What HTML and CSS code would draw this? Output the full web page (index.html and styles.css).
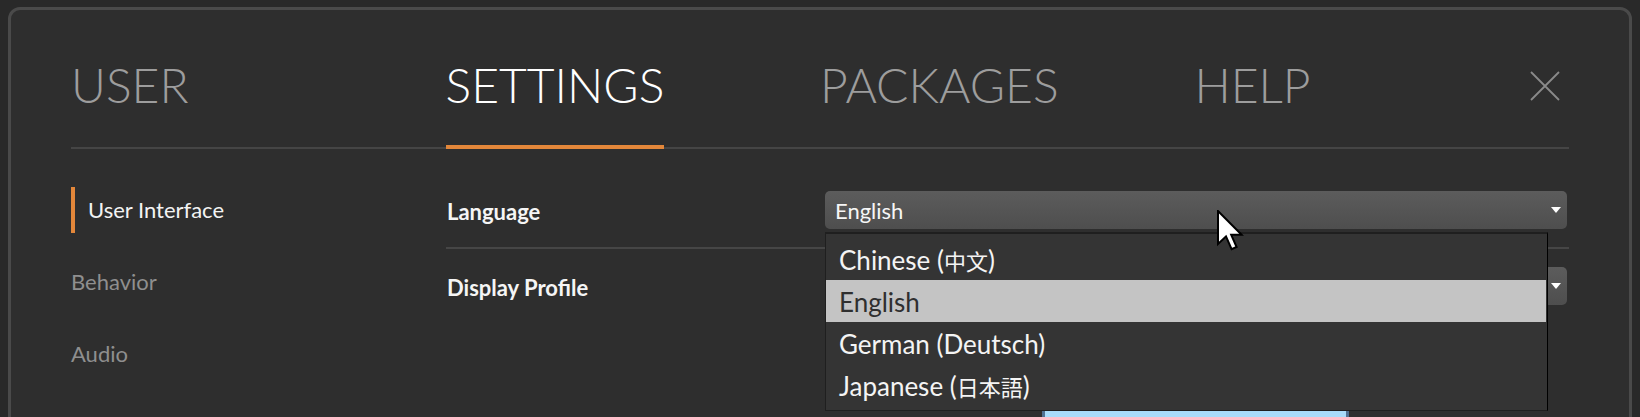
FILE: index.html
```html
<!DOCTYPE html>
<html lang="en">
<head>
<meta charset="utf-8">
<title>Settings</title>
<link rel="stylesheet" href="styles.css">
</head>
<body>
<div class="dialog">
  <header class="tabs">
    <div class="tab"><span class="tab-label">USER</span></div>
    <div class="tab active"><span class="tab-label">SETTINGS</span></div>
    <div class="tab"><span class="tab-label">PACKAGES</span></div>
    <div class="tab tab-last">
      <span class="tab-label">HELP</span>
      <button class="close" aria-label="Close">
        <svg width="30" height="30" viewBox="0 0 30 30"><path d="M1 1 L29 29 M29 1 L1 29" stroke="#8a8a8a" stroke-width="1.8" fill="none"/></svg>
      </button>
    </div>
  </header>
  <div class="content">
    <nav class="sidebar">
      <a class="side-item active">User Interface</a>
      <a class="side-item">Behavior</a>
      <a class="side-item">Audio</a>
    </nav>
    <section class="settings">
      <div class="row divided">
        <div class="label">Language</div>
        <div class="select">
          <span class="value">English</span><span class="arrow"></span>
          <ul class="menu">
            <li>Chinese (<span class="zh" lang="zh">中文</span>)</li>
            <li class="hl">English</li>
            <li>German (Deutsch)</li>
            <li>Japanese (<span class="ja" lang="ja">日本語</span>)</li>
          </ul>
        </div>
      </div>
      <div class="row">
        <div class="label">Display Profile</div>
        <div class="select"><span class="value"></span><span class="arrow"></span></div>
      </div>
      <div class="preview"></div>
    </section>
  </div>
</div>
<svg class="cursor" width="28" height="44" viewBox="0 0 14 22">
  <path d="M0.5 0.5 L0.5 17 L4.5 13.2 L7.3 19.6 L9.8 18.5 L7.1 12.4 L12.3 12.4 Z" fill="#ffffff" stroke="#000000" stroke-width="1" stroke-linejoin="miter"/>
</svg>
</body>
</html>
```

FILE: styles.css
```css
* { box-sizing: border-box; }
html, body { margin: 0; padding: 0; }
body {
  width: 1640px;
  height: 417px;
  overflow: hidden;
  background: #292929;
  font-family: Lato, "Noto Sans", sans-serif;
  position: relative;
}
.dialog {
  margin: 7px 0 0 8px;
  width: 1624px;
  height: 520px;
  background: #2e2e2e;
  border: 3px solid #4a4a4a;
  border-radius: 12px;
  padding: 0 60px;
}
.tabs {
  display: grid;
  grid-template-columns: repeat(4, 1fr);
  padding-top: 51px;
  border-bottom: 2px solid #454545;
}
.tab {
  display: flex;
  align-items: flex-end;
}
.tab-last { justify-content: space-between; align-items: flex-start; }
.tab-label {
  display: block;
  font-size: 48px;
  font-weight: 300;
  line-height: 48px;
  color: #9d9d9d;
  padding-bottom: 36px;
  border-bottom: 4px solid transparent;
  margin-bottom: -2px;
}
.tab.active .tab-label {
  color: #ffffff;
  border-bottom-color: #e3873a;
}
.close {
  margin: 10px 9px 0 0;
  width: 30px;
  height: 30px;
  padding: 0;
  border: 0;
  background: none;
  display: block;
}
.close svg { display: block; }
.content {
  display: grid;
  grid-template-columns: 375px 1fr;
  padding-top: 24px;
}
.sidebar {
  display: flex;
  flex-direction: column;
  align-items: flex-start;
  gap: 26px;
  margin-top: 14px;
}
.side-item {
  display: block;
  height: 46px;
  line-height: 46px;
  font-size: 22px;
  color: #8f8f8f;
}
.side-item.active {
  color: #f3f3f3;
  padding-left: 13px;
  border-left: 4px solid #e3873a;
}
.row {
  display: grid;
  grid-template-columns: 379px 742px;
  align-items: center;
  padding: 18px 0;
}
.row.divided { border-bottom: 2px solid #464646; }
.label {
  font-size: 22px;
  font-weight: 700;
  color: #f5f5f5;
  padding: 2px 0 0 1px;
}
.select {
  position: relative;
  height: 38px;
  border-radius: 5px;
  background: linear-gradient(#5c5c5c, #4e4e4e);
  display: flex;
  align-items: center;
  justify-content: space-between;
  padding: 0 6px 0 10px;
}
.value {
  font-size: 22px;
  color: #f6f6f6;
}
.arrow {
  width: 0;
  height: 0;
  border-left: 5px solid transparent;
  border-right: 5px solid transparent;
  border-top: 6px solid #ffffff;
}
.menu {
  position: absolute;
  left: 0;
  top: 41px;
  width: 723px;
  margin: 0;
  padding: 4px 1px 4px 0;
  list-style: none;
  background: #343434;
  border: 1px solid #1f1f1f;
  border-top: 2px solid #1f1f1f;
  border-right-color: #000000;
  z-index: 2;
}
.menu li {
  height: 42px;
  line-height: 39px;
  padding: 3px 0 0 13px;
  font-size: 26px;
  color: #f4f4f4;
  font-family: Lato, "Noto Sans CJK SC", sans-serif;
}
.menu li.hl {
  background: #c4c4c4;
  color: #2f2f2f;
}
.menu .zh { font-family: "Noto Sans CJK SC", sans-serif; font-size: 22px; }
.menu .ja { font-family: "Noto Sans CJK JP", sans-serif; font-size: 22px; }
.preview {
  margin: 88px 0 0 596px;
  width: 307px;
  height: 60px;
  background: #a8dbf9;
  border-left: 3px solid #4f7192;
  border-right: 3px solid #4f7192;
}
.cursor {
  position: absolute;
  left: 1217px;
  top: 210px;
  z-index: 5;
}
```
